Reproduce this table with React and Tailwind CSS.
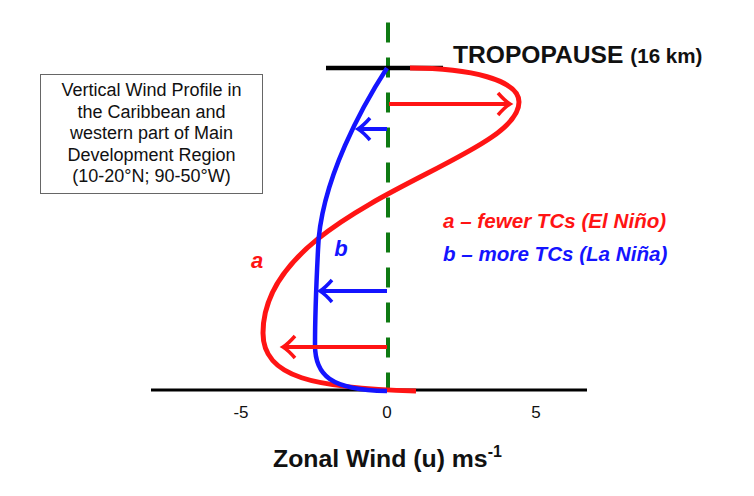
import React from "react";

const RED = "#ff1414";
const BLUE = "#1414ff";
const GREEN = "#0e7a12";

const redPath =
  "M416,391 C315,388 263,378 263,333 C263,206.4 519,161.5 519,102 C519,80 470,68 410,68";

const bluePath =
  "M387,68 C365,102 320,180 318,250 C316,290 315,320 315,345 C315,375 330,390 387,391";

function Arrow({ x1, x2, y, color }) {
  const dir = x2 < x1 ? 1 : -1;
  const bx = x2 + dir * 12;
  return (
    <g stroke={color} fill="none" strokeWidth="4">
      <line x1={x1} y1={y} x2={x2 + dir * 2} y2={y} />
      <path
        d={`M${bx},${y - 11} Q${x2 + dir * 5},${y - 3} ${x2},${y} Q${x2 + dir * 5},${y + 3} ${bx},${y + 11}`}
        strokeWidth="3.5"
        strokeLinejoin="miter"
      />
    </g>
  );
}

export default function App() {
  return (
    <div className="relative w-[754px] h-[496px] bg-white overflow-hidden font-['Liberation_Sans',Arial,sans-serif] text-[#111]">
      <svg className="absolute inset-0" width="754" height="496" viewBox="0 0 754 496">
        <line x1="388" y1="22.5" x2="388" y2="388" stroke={GREEN} strokeWidth="4" strokeDasharray="20 15" />
        <line x1="151" y1="390" x2="587" y2="390" stroke="#000" strokeWidth="3" />
        <line x1="326" y1="68" x2="443" y2="68" stroke="#000" strokeWidth="4.5" />
        <path d={redPath} stroke={RED} strokeWidth="5" fill="none" />
        <path d={bluePath} stroke={BLUE} strokeWidth="4.5" fill="none" />
        <Arrow x1={389} x2={510} y={104} color={RED} />
        <Arrow x1={387} x2={358} y={129} color={BLUE} />
        <Arrow x1={387} x2={320} y={291} color={BLUE} />
        <Arrow x1={387} x2={283} y={347} color={RED} />
        <g fontSize="17" fill="#111" textAnchor="middle">
          <text x="241" y="418">-5</text>
          <text x="387" y="418">0</text>
          <text x="536" y="418">5</text>
        </g>
        <text x="257" y="268" fontSize="22" fontWeight="bold" fontStyle="italic" fill={RED} textAnchor="middle">a</text>
        <text x="341" y="256" fontSize="22" fontWeight="bold" fontStyle="italic" fill={BLUE} textAnchor="middle">b</text>
        <text x="443" y="228" fontSize="20.6" fontWeight="bold" fontStyle="italic" fill={RED}>a – fewer TCs (El Niño)</text>
        <text x="443" y="261" fontSize="20.6" fontWeight="bold" fontStyle="italic" fill={BLUE}>b – more TCs (La Niña)</text>
        <text x="453" y="63" fontWeight="bold" fill="#111">
          <tspan fontSize="24.6">TROPOPAUSE</tspan>
          <tspan fontSize="20.6" dx="7">(16 km)</tspan>
        </text>
        <text x="273" y="467" fontWeight="bold" fill="#111">
          <tspan fontSize="24.8">Zonal Wind (u) ms</tspan>
          <tspan fontSize="16" dy="-10">-1</tspan>
        </text>
      </svg>
      <div className="absolute left-[40px] top-[74px] w-[223px] h-[120px] border border-[#666] bg-white flex items-center justify-center text-center text-[18px] leading-[21.6px] text-[#111]">
        <p>
          Vertical Wind Profile in
          <br />
          the Caribbean and
          <br />
          western part of Main
          <br />
          Development Region
          <br />
          (10-20°N; 90-50°W)
        </p>
      </div>
    </div>
  );
}
